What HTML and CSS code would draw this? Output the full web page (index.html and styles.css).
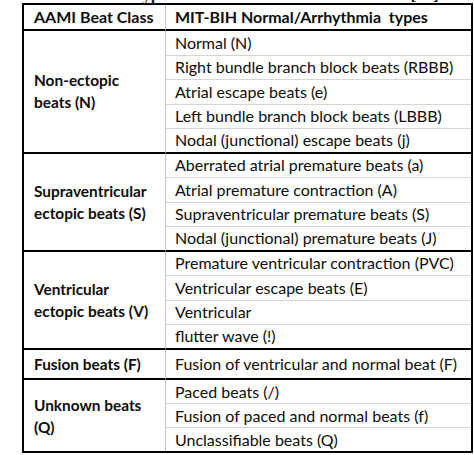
FILE: index.html
```html
<!DOCTYPE html>
<html>
<head>
<meta charset="utf-8">
<link rel="stylesheet" href="styles.css">
</head>
<body>
<div class="caption">Table I. Beat types in the AAMI and MIT-BIH sets [17]</div>
<table class="tbl">
  <tr class="head">
    <th class="cls">AAMI Beat Class</th>
    <th class="typ">MIT-BIH Normal/Arrhythmia&nbsp; types</th>
  </tr>
  <tr>
    <td class="cls end" rowspan="5">Non-ectopic<br>beats (N)</td>
    <td class="typ">Normal (N)</td>
  </tr>
  <tr><td class="typ">Right bundle branch block beats (RBBB)</td></tr>
  <tr><td class="typ">Atrial escape beats (e)</td></tr>
  <tr><td class="typ">Left bundle branch block beats (LBBB)</td></tr>
  <tr><td class="typ end">Nodal (junctional) escape beats (j)</td></tr>
  <tr>
    <td class="cls end" rowspan="4">Supraventricular<br>ectopic beats (S)</td>
    <td class="typ">Aberrated atrial premature beats (a)</td>
  </tr>
  <tr><td class="typ">Atrial premature contraction (A)</td></tr>
  <tr><td class="typ">Supraventricular premature beats (S)</td></tr>
  <tr><td class="typ end">Nodal (junctional) premature beats (J)</td></tr>
  <tr>
    <td class="cls end" rowspan="4">Ventricular<br>ectopic beats (V)</td>
    <td class="typ">Premature ventricular contraction (PVC)</td>
  </tr>
  <tr><td class="typ">Ventricular escape beats (E)</td></tr>
  <tr><td class="typ">Ventricular</td></tr>
  <tr><td class="typ end">flutter wave (!)</td></tr>
  <tr class="fusion">
    <td class="cls end">Fusion beats (F)</td>
    <td class="typ end">Fusion of ventricular and normal beat (F)</td>
  </tr>
  <tr class="unk">
    <td class="cls last" rowspan="3">Unknown beats<br>(Q)</td>
    <td class="typ">Paced beats (/)</td>
  </tr>
  <tr class="unk"><td class="typ">Fusion of paced and normal beats (f)</td></tr>
  <tr class="unk"><td class="typ last">Unclassifiable beats (Q)</td></tr>
</table>
</body>
</html>
```

FILE: styles.css
```css
html, body {
  margin: 0;
  padding: 0;
  background: #fff;
}

body {
  width: 474px;
  height: 455px;
  overflow: hidden;
}

.caption {
  font-family: "Liberation Serif", serif;
  font-weight: bold;
  font-size: 17px;
  line-height: 17px;
  height: 17px;
  margin-top: -14px;
  margin-bottom: 0;
  padding-left: 40px;
  white-space: nowrap;
  color: #222;
}

.tbl {
  margin-left: 22px;
  width: 451px;
  border: 2px solid #000;
  border-collapse: separate;
  border-spacing: 0;
  font-family: Lato, "Open Sans", sans-serif;
  font-size: 16px;
  color: #0d0d0d;
  table-layout: fixed;
}

.tbl th,
.tbl td {
  padding: 0 9px;
  text-align: left;
  white-space: nowrap;
  vertical-align: middle;
  line-height: 18px;
}

.tbl th {
  font-weight: bold;
  height: 24px;
  border-bottom: 2px solid #000;
}

.tbl th.cls {
  width: 122px;
  padding-left: 10px;
  border-right: 1px solid #c4c4c4;
}

.tbl td.cls {
  font-weight: bold;
  font-size: 15.4px;
  padding-left: 10px;
  line-height: 22px;
  border-right: 1px solid #c4c4c4;
}

.tbl td.typ {
  height: 23.5px;
  border-bottom: 1px solid #d6d6d6;
}

.tbl td.end {
  border-bottom: 2px solid #000;
}

.tbl td.typ.end {
  height: 22.5px;
}

.tbl tr.fusion td.typ {
  height: 28.5px;
}

.tbl tr.unk td.typ {
  height: 23px;
}

.tbl td.last {
  border-bottom: 0;
}

.tbl tr.unk td.typ.last {
  height: 23px;
}
```
